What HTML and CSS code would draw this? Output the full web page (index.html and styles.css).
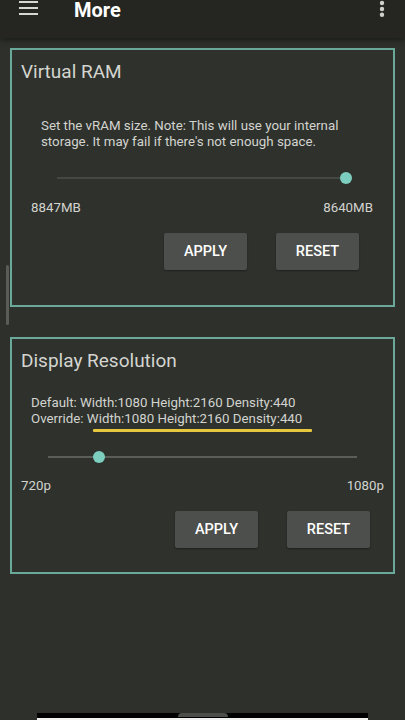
FILE: index.html
```html
<!DOCTYPE html>
<html>
<head>
<meta charset="utf-8">
<link rel="stylesheet" href="styles.css">
</head>
<body>
<header class="appbar">
  <svg class="menu" width="19" height="16" viewBox="0 0 19 16"><rect x="0" y="1" width="19" height="2" fill="#d6d6d3"/><rect x="0" y="7" width="19" height="2" fill="#d6d6d3"/><rect x="0" y="13" width="19" height="2" fill="#d6d6d3"/></svg>
  <div class="title">More</div>
  <svg class="more" width="6" height="18" viewBox="0 0 6 18"><circle cx="3" cy="3" r="2.2" fill="#cfcfcc"/><circle cx="3" cy="9" r="2.2" fill="#cfcfcc"/><circle cx="3" cy="14.8" r="2.2" fill="#cfcfcc"/></svg>
</header>
<main class="content">
  <section class="card card-ram">
    <h2 class="card-title">Virtual RAM</h2>
    <p class="desc">Set the vRAM size. Note: This will use your internal storage. It may fail if there's not enough space.</p>
    <div class="slider slider-ram"><div class="track"></div><div class="thumb thumb-ram"></div></div>
    <div class="labels labels-ram"><span>8847MB</span><span>8640MB</span></div>
    <div class="buttons buttons-ram"><button class="btn">APPLY</button><button class="btn">RESET</button></div>
  </section>
  <section class="card card-res">
    <h2 class="card-title">Display Resolution</h2>
    <p class="info">Default: Width:1080 Height:2160 Density:440<br>Override: Width:1080 Height:2160 Density:440</p>
    <div class="mark"></div>
    <div class="slider slider-res"><div class="track track-light"></div><div class="thumb thumb-res"></div></div>
    <div class="labels labels-res"><span>720p</span><span>1080p</span></div>
    <div class="buttons buttons-res"><button class="btn">APPLY</button><button class="btn">RESET</button></div>
  </section>
</main>
<div class="navstrip"><div class="navtab"></div></div>
<div class="scrollbar"></div>
</body>
</html>
```
FILE: styles.css
```css
html, body { margin: 0; padding: 0; }
body {
  width: 405px;
  height: 720px;
  overflow: hidden;
  background: #2d302b;
  font-family: Roboto, "Noto Sans", sans-serif;
  display: flex;
  flex-direction: column;
  position: relative;
}
.appbar {
  height: 38px;
  flex: 0 0 38px;
  background: #252622;
  display: flex;
  align-items: flex-start;
  box-shadow: 0 2px 6px rgba(0,0,0,0.45);
  position: relative;
  z-index: 1;
}
.menu { margin-left: 19px; margin-top: 0; display: block; }
.title {
  margin-left: 36px;
  color: #ffffff;
  font-size: 20px;
  line-height: 20px;
  font-weight: 700;
}
.more { margin-left: auto; margin-right: 20px; display: block; }
.content {
  flex: 1;
  padding: 10px 10px 0;
  display: flex;
  flex-direction: column;
  gap: 30px;
}
.card {
  border: 2px solid #6aa99a;
  background: #2e312c;
  padding-top: 10px;
  margin: 0;
}
.card-ram { padding-bottom: 35px; }
.card-res { padding-bottom: 24px; }
.card-title {
  margin: 0;
  padding-left: 9px;
  font-size: 19px;
  line-height: 24px;
  font-weight: 400;
  color: #d4d5d0;
}
.desc {
  margin: 34px 0 0 29px;
  width: 315px;
  font-size: 13.3px;
  line-height: 16px;
  color: #d3d4cf;
}
.info {
  margin: 22px 0 0 19px;
  font-size: 13.3px;
  line-height: 16px;
  color: #d3d4cf;
}
.mark {
  margin: 2px 0 0 81px;
  width: 219px;
  height: 3px;
  background: #e6c73d;
  border-radius: 1px;
}
.slider {
  position: relative;
  height: 12px;
  display: flex;
  align-items: center;
}
.slider-ram { margin: 22px 0 0 45px; width: 293px; }
.slider-res { margin: 19px 0 0 36px; width: 309px; }
.track { width: 100%; height: 2px; background: #444843; }
.track-light { background: #5a5d58; }
.thumb {
  position: absolute;
  top: 0;
  width: 12px;
  height: 12px;
  border-radius: 50%;
  background: #7ccfbf;
}
.thumb-ram { left: 283px; }
.thumb-res { left: 45px; }
.labels {
  display: flex;
  justify-content: space-between;
  font-size: 13.3px;
  line-height: 16px;
  color: #d3d4cf;
}
.labels-ram { margin-top: 16px; padding: 0 20px 0 19px; }
.labels-res { margin-top: 15px; padding: 0 9px 0 9px; }
.buttons {
  display: flex;
  justify-content: flex-end;
  gap: 29px;
}
.buttons-ram { margin-top: 17px; padding-right: 34px; }
.buttons-res { margin-top: 17px; padding-right: 23px; }
.btn {
  width: 83px;
  height: 37px;
  border: none;
  border-radius: 2px;
  background: #4d4f4c;
  color: #ffffff;
  font-family: Roboto, "Noto Sans", sans-serif;
  font-size: 14.5px;
  font-weight: 500;
  box-shadow: 0 1px 2px rgba(0,0,0,0.35);
  padding: 0;
}
.navstrip {
  flex: 0 0 7px;
  margin: 0 37px;
  background: #000000;
  border-bottom: 2px solid #f2f2f0;
  box-sizing: border-box;
}
.navtab {
  margin-left: 141px;
  width: 50px;
  height: 4px;
  background: #4c4e4a;
  border-radius: 4px 4px 0 0;
}
.scrollbar {
  position: absolute;
  left: 6px;
  top: 265px;
  width: 3px;
  height: 60px;
  background: #5a5c58;
  border-radius: 2px;
}
```
